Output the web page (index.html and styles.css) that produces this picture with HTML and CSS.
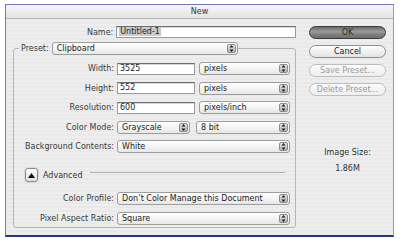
FILE: index.html
```html
<!DOCTYPE html>
<html>
<head>
<meta charset="utf-8">
<link rel="stylesheet" href="styles.css">
</head>
<body>
<div class="win">
  <div class="titlebar">New</div>
  <div class="content">
    <div class="left">
      <div class="row name-row">
        <span class="label">Name:</span>
        <span class="field name-field"><span class="sel">Untitled-1</span></span>
      </div>
      <div class="group">
        <div class="legend">
          <span class="legend-label">Preset:</span>
          <span class="popup preset-popup"><span class="ptext">Clipboard</span><span class="step"></span></span>
        </div>
        <div class="grid">
          <span class="label">Width:</span>
          <div class="ctrls">
            <span class="field w78">3525</span>
            <span class="popup w91"><span class="ptext">pixels</span><span class="step"></span></span>
          </div>
          <span class="label">Height:</span>
          <div class="ctrls">
            <span class="field w78">552</span>
            <span class="popup w91"><span class="ptext">pixels</span><span class="step"></span></span>
          </div>
          <span class="label">Resolution:</span>
          <div class="ctrls">
            <span class="field w78">600</span>
            <span class="popup w91"><span class="ptext">pixels/inch</span><span class="step"></span></span>
          </div>
          <span class="label">Color Mode:</span>
          <div class="ctrls gap6">
            <span class="popup w73"><span class="ptext">Grayscale</span><span class="step"></span></span>
            <span class="popup w94"><span class="ptext">8 bit</span><span class="step"></span></span>
          </div>
          <span class="label">Background Contents:</span>
          <div class="ctrls">
            <span class="popup w173"><span class="ptext">White</span><span class="step"></span></span>
          </div>
        </div>
        <div class="adv">
          <span class="disc"><svg width="7" height="5" viewBox="0 0 7 5"><path d="M3.5 0 L7 5 L0 5 Z" fill="#111"/></svg></span>
          <span class="adv-text">Advanced</span>
          <span class="adv-line"></span>
        </div>
        <div class="grid grid2">
          <span class="label">Color Profile:</span>
          <div class="ctrls">
            <span class="popup w173"><span class="ptext">Don’t Color Manage this Document</span><span class="step"></span></span>
          </div>
          <span class="label">Pixel Aspect Ratio:</span>
          <div class="ctrls">
            <span class="popup w173"><span class="ptext">Square</span><span class="step"></span></span>
          </div>
        </div>
      </div>
    </div>
    <div class="right">
      <span class="btn ok">OK</span>
      <span class="btn">Cancel</span>
      <span class="btn dis">Save Preset...</span>
      <span class="btn dis">Delete Preset...</span>
      <div class="size">
        <div>Image Size:</div>
        <div class="size-val">1.86M</div>
      </div>
    </div>
  </div>
</div>
</body>
</html>
```
FILE: styles.css
```css
html, body {
  margin: 0;
  padding: 0;
  background: #ffffff;
}
body {
  font-family: "DejaVu Sans", "Liberation Sans", sans-serif;
  font-size: 8px;
  color: #222;
}
.win {
  margin: 4px 0 0 5px;
  width: 387px;
  height: 230px;
  border: 1px solid #7676b8;
  border-bottom: 2px solid #2b3386;
  border-right: 1px solid #9a9ac4;
  background: repeating-linear-gradient(#eeeeee 0 2px, #e9e9e9 2px 4px);
  background-attachment: fixed;
  display: flex;
  flex-direction: column;
}
.titlebar {
  height: 13px;
  line-height: 13px;
  text-align: center;
  background: linear-gradient(#f6f6f6, #e4e4e4);
  border-bottom: 1px solid #b4b4b4;
  color: #333;
}
.content {
  display: flex;
  padding: 7px 0 0 7px;
}
.left {
  width: 283px;
}
.row {
  display: flex;
  align-items: center;
}
.label {
  color: #3a3a3a;
  text-align: right;
  white-space: nowrap;
}
.name-row .label {
  width: 101px;
  margin-right: 3px;
}
.field {
  box-sizing: border-box;
  height: 12px;
  line-height: 10px;
  background: #fff;
  border: 1px solid #9a9a9a;
  border-top-color: #6e6e6e;
  box-shadow: inset 0 1px 0 #d8d8d8;
  padding-left: 2px;
  color: #222;
  display: inline-block;
  white-space: nowrap;
}
.name-field {
  width: 181px;
}
.sel {
  background: #cbcbcb;
  padding: 0 1px;
}
.group {
  margin-top: 10px;
  height: 180px;
  box-sizing: border-box;
  border: 1px solid #b6b6b6;
  border-radius: 3px;
}
.legend {
  display: flex;
  align-items: center;
  margin: -7px 0 0 5px;
  width: 224px;
}
.legend-label, .legend .popup {
  background: repeating-linear-gradient(#eeeeee 0 2px, #e9e9e9 2px 4px);
  background-attachment: fixed;
}
.legend-label {
  padding: 0 3px 0 2px;
  color: #3a3a3a;
  line-height: 13px;
}
.popup {
  box-sizing: border-box;
  height: 13px;
  border: 1px solid #9c9c9c;
  border-radius: 3px;
  background: linear-gradient(#ffffff, #f2f2f2 60%, #e6e6e6);
  display: inline-flex;
  align-items: center;
  justify-content: space-between;
  padding: 0 1px 0 4px;
  color: #222;
  white-space: nowrap;
  overflow: hidden;
}
.legend .popup {
  background: linear-gradient(#ffffff, #f2f2f2 60%, #e6e6e6);
}
.preset-popup {
  width: 186px;
}
.ptext {
  overflow: hidden;
}
.step {
  flex: none;
  width: 9px;
  height: 9px;
  border-radius: 2px;
  background:
    url("data:image/svg+xml,%3Csvg xmlns='http://www.w3.org/2000/svg' width='9' height='9'%3E%3Cpath d='M4.5 1 L6.5 3.5 L2.5 3.5 Z M4.5 8 L6.5 5.5 L2.5 5.5 Z' fill='%23222'/%3E%3C/svg%3E") no-repeat center,
    linear-gradient(#e4e4e4, #b4b4b4);
  border: 1px solid #8c8c8c;
  box-sizing: border-box;
}
.grid {
  display: grid;
  grid-template-columns: 100px auto;
  column-gap: 3px;
  row-gap: 6.5px;
  align-items: center;
  margin-top: 7px;
}
.grid > * {
  height: 13px;
  line-height: 13px;
}
.ctrls {
  display: flex;
  align-items: center;
  gap: 4px;
}
.ctrls.gap6 {
  gap: 6px;
}
.w78 { width: 78px; }
.w91 { width: 91px; }
.w73 { width: 73px; }
.w94 { width: 94px; }
.w173 { width: 173px; }
.adv {
  display: flex;
  align-items: center;
  margin: 15px 0 0 11px;
  height: 14px;
}
.disc {
  box-sizing: border-box;
  width: 13px;
  height: 14px;
  border: 1px solid #8a8a8a;
  border-radius: 3px;
  background: linear-gradient(#fdfdfd, #e0e0e0);
  display: flex;
  align-items: center;
  justify-content: center;
  box-shadow: 0 0 0 1px #dcdcdc;
}
.adv-text {
  margin-left: 5px;
  color: #333;
}
.adv-line {
  margin-left: 7px;
  width: 195px;
  height: 1px;
  background: #b0b0b0;
  margin-top: -5px;
}
.grid2 {
  margin-top: 10px;
}
.right {
  margin-left: 13px;
  width: 77px;
  display: flex;
  flex-direction: column;
}
.btn {
  box-sizing: border-box;
  height: 13px;
  line-height: 11px;
  border: 1px solid #8c8c8c;
  border-radius: 7px;
  background: linear-gradient(#ffffff, #f0f0f0 50%, #e2e2e2);
  text-align: center;
  color: #222;
  margin-bottom: 6px;
}
.btn.ok {
  border-color: #3c3c3c;
  background: linear-gradient(#6a6a6a, #9c9c9c 45%, #858585 60%, #6c6c6c);
  color: #2a2a2a;
}
.btn.dis {
  border-color: #bdbdbd;
  color: #9a9a9a;
  background: linear-gradient(#fafafa, #efefef);
}
.size {
  margin-top: 43px;
  text-align: center;
  color: #333;
  line-height: 16px;
}
```
